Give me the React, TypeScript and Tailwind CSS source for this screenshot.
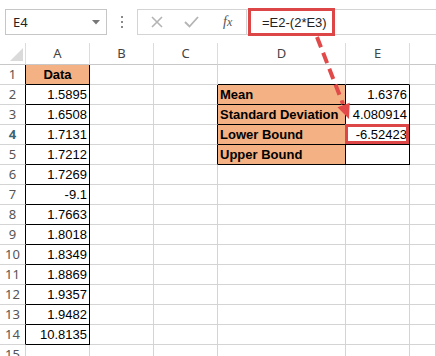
import React from 'react';

const A: (string | number)[] = ['Data', '1.5895', '1.6508', '1.7131', '1.7212', '1.7269', '-9.1', '1.7663', '1.8018', '1.8349', '1.8869', '1.9357', '1.9482', '10.8135'];
const D: Record<number, string> = { 2: 'Mean', 3: 'Standard Deviation', 4: 'Lower Bound', 5: 'Upper Bound' };
const E: Record<number, string> = { 2: '1.6376', 3: '4.080914', 4: '-6.52423', 5: '' };

const isB = (r: number, c: number) => (c === 1 && r >= 1 && r <= 14) || ((c === 4 || c === 5) && r >= 2 && r <= 5);

const headers = ['', 'A', 'B', 'C', 'D', 'E', ''];

function Cell({ r, c }: { r: number; c: number }) {
  const rb = isB(r, c) || isB(r, c + 1);
  const bb = isB(r, c) || isB(r + 1, c);
  const orange = (c === 1 && r === 1) || (c === 4 && r >= 2 && r <= 5);
  let content: React.ReactNode = null;
  let align = 'justify-end pr-[2px]';
  let weight = 'font-normal';
  if (c === 0) {
    content = r;
    align = 'justify-center';
    weight = r === 4 ? 'font-bold text-[#3b6478]' : 'font-normal text-[#555555]';
  } else if (c === 1 && r <= 14) {
    content = A[r - 1];
    if (r === 1) {
      align = 'justify-center';
      weight = 'font-bold';
    }
  } else if (c === 4 && D[r]) {
    content = D[r];
    align = 'justify-start pl-[2px]';
    weight = 'font-bold';
  } else if (c === 5 && E[r] !== undefined) {
    content = E[r];
  }
  return (
    <div
      className={`relative h-[20px] border-r border-b flex items-center overflow-visible whitespace-nowrap ${rb ? 'border-r-black' : 'border-r-[#d4d4d4]'} ${bb ? 'border-b-black' : 'border-b-[#d4d4d4]'} ${orange ? 'bg-[#f4b183]' : 'bg-white'} ${align}`}
    >
      <span
        className={`${c === 0 ? "text-[13px] font-['Noto_Sans',sans-serif]" : "text-[13px] font-['Liberation_Sans',Arial,sans-serif] text-black"} ${weight} leading-none`}
      >
        {content}
      </span>
      {r === 4 && c === 5 && (
        <div className="absolute -left-[1px] -top-[1px] right-0 bottom-0 border-[3px] border-[#dd4646]" />
      )}
    </div>
  );
}

export default function App() {
  const rows = Array.from({ length: 15 }, (_, i) => i + 1);
  return (
    <div className="relative w-[436px] h-[356px] overflow-hidden bg-white">
      {/* Toolbar */}
      <div className="flex items-start pt-[9px] h-[43px]">
        <div className="ml-[5px] w-[102px] h-[26px] border border-[#c6c6c6] flex items-center justify-between pl-[7px] pr-[6px]">
          <span className="text-[13px] text-[#222] font-['Noto_Sans',sans-serif] leading-none">E4</span>
          <svg width="8" height="5" viewBox="0 0 8 5">
            <polygon points="0,0 8,0 4,4.5" fill="#777" />
          </svg>
        </div>
        <div className="w-[30px] h-[26px] flex flex-col items-center justify-center gap-[3px]">
          <div className="w-[2px] h-[2px] bg-[#8a8a8a]" />
          <div className="w-[2px] h-[2px] bg-[#8a8a8a]" />
          <div className="w-[2px] h-[2px] bg-[#8a8a8a]" />
        </div>
        <div className="w-[110px] h-[26px] border border-[#d4d4d4] flex items-center">
          <svg className="ml-[13px]" width="12" height="12" viewBox="0 0 12 12">
            <path d="M1 1 L11 11 M11 1 L1 11" stroke="#b4b4b4" strokeWidth="1.6" />
          </svg>
          <svg className="ml-[21px]" width="15" height="12" viewBox="0 0 15 12">
            <path d="M1 6 L5.5 10.5 L14 1" stroke="#b4b4b4" strokeWidth="1.8" fill="none" />
          </svg>
          <span className="ml-[24px] text-[14px] italic font-['Liberation_Serif',serif] text-[#555] leading-none">
            f<span className="text-[12px]">x</span>
          </span>
        </div>
        <div className="relative flex-1 h-[26px] border-y border-[#d4d4d4] flex items-center pl-[15px]">
          <span className="text-[13px] font-['Liberation_Sans',Arial,sans-serif] text-[#222] leading-none">=E2-(2*E3)</span>
          <div className="absolute left-[1px] -top-[2px] w-[87px] h-[28px] border-[3px] border-[#dd4646]" />
        </div>
      </div>

      {/* Grid */}
      <div className="grid grid-cols-[26px_64px_64px_64px_128px_64px_1fr]">
        {headers.map((h, i) => (
          <div
            key={`h${i}`}
            className={`relative h-[22px] border-b border-b-[#c8c8c8] ${i < headers.length - 1 ? 'border-r border-r-[#dcdcdc]' : ''} flex items-center justify-center`}
          >
            {i === 0 ? (
              <svg className="absolute left-[10px] top-[5px]" width="13" height="13" viewBox="0 0 13 13">
                <polygon points="13,0 13,13 0,13" fill="#dadada" />
              </svg>
            ) : (
              <span className="text-[13px] text-[#444] font-['Noto_Sans',sans-serif] leading-none">{h}</span>
            )}
          </div>
        ))}
        {rows.map((r) =>
          [0, 1, 2, 3, 4, 5, 6].map((c) => <Cell key={`${r}-${c}`} r={r} c={c} />)
        )}
      </div>

      {/* Arrow */}
      <svg className="absolute left-0 top-0 pointer-events-none" width="436" height="356" viewBox="0 0 436 356">
        <line x1="317" y1="37" x2="343" y2="104" stroke="#e24a4a" strokeWidth="4" strokeDasharray="11 6" />
        <polygon points="349.7,102.7 337.5,107.3 349,119" fill="#e24a4a" />
      </svg>
    </div>
  );
}
